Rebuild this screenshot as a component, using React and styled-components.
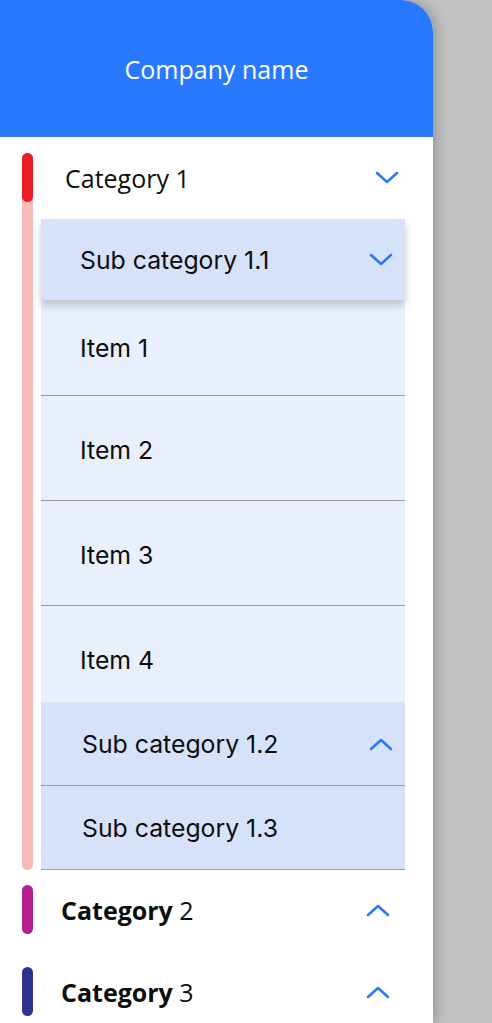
import React from "react";
import styled, { createGlobalStyle } from "styled-components";

const Global = createGlobalStyle`
  html, body { margin: 0; padding: 0; }
  body {
    background: #c2c2c2;
    font-family: "Open Sans", "Liberation Sans", sans-serif;
    overflow: hidden;
  }
`;

const Page = styled.div`
  width: 492px;
  height: 1023px;
  background: #c2c2c2;
`;

const Panel = styled.aside`
  width: 433px;
  height: 1023px;
  background: #ffffff;
  border-top-right-radius: 32px;
  box-shadow: 2px 0 14px rgba(0, 0, 0, 0.28);
  overflow: hidden;
  display: flex;
  flex-direction: column;
`;

const Header = styled.header`
  height: 137px;
  flex: none;
  background: #2979ff;
  color: #ffffff;
  display: flex;
  align-items: center;
  justify-content: center;
  font-family: "Open Sans", sans-serif;
  font-size: 25px;
  font-weight: 500;
`;

const Nav = styled.nav`
  padding: 16px 28px 0 22px;
  display: flex;
  flex-direction: column;
`;

const Group = styled.section`
  display: flex;
  gap: 8px;
  margin-top: ${(p) => p.$mt || 0}px;
`;

const Bar = styled.div`
  width: 11px;
  flex: none;
  border-radius: 6px;
  background: ${(p) => p.$color};
  display: flex;
  flex-direction: column;
`;

const BarCap = styled.div`
  height: 49px;
  border-radius: 6px;
  background: ${(p) => p.$color};
`;

const Body = styled.div`
  flex: 1;
  min-width: 0;
  display: flex;
  flex-direction: column;
`;

const CategoryRow = styled.div`
  height: 49px;
  display: flex;
  align-items: center;
  justify-content: space-between;
  padding-left: ${(p) => p.$indent}px;
  padding-right: ${(p) => p.$right}px;
`;

const CategoryLabel = styled.span`
  font-family: "Open Sans", sans-serif;
  font-size: 25px;
  color: #0d0d0d;
  b { font-weight: 700; }
`;

const SubList = styled.div`
  margin-top: 17px;
  display: flex;
  flex-direction: column;
`;

const SubRow = styled.div`
  height: ${(p) => p.$h}px;
  background: #d6e2fa;
  display: flex;
  align-items: center;
  justify-content: space-between;
  padding-left: ${(p) => p.$indent}px;
  padding-right: 12px;
  position: relative;
  z-index: ${(p) => (p.$raised ? 2 : 0)};
  box-shadow: ${(p) => (p.$raised ? "0 5px 9px rgba(0, 0, 0, 0.2)" : "none")};
  border-bottom: ${(p) => (p.$line ? "1px solid #9e9e9e" : "none")};
`;

const Label = styled.span`
  font-family: Inter, "Noto Sans", sans-serif;
  font-size: 24.8px;
  color: #0d0d0d;
`;

const Item = styled.div`
  height: ${(p) => p.$h}px;
  background: #e9effc;
  display: flex;
  align-items: center;
  padding-left: 39px;
  padding-top: ${(p) => p.$shift || 0}px;
  box-sizing: border-box;
  border-bottom: ${(p) => (p.$line ? "1px solid #9a9a9a" : "none")};
`;

const Chevron = ({ up }) => (
  <svg width="24" height="14" viewBox="0 0 24 14" fill="none">
    <polyline
      points={up ? "2,12 12,3 22,12" : "2,2 12,11 22,2"}
      stroke="#2979ff"
      strokeWidth="2.6"
      strokeLinecap="round"
      strokeLinejoin="round"
    />
  </svg>
);

export default function App() {
  return (
    <Page>
      <Global />
      <Panel>
        <Header>Company name</Header>
        <Nav>
          <Group>
            <Bar $color="#f8b9bb">
              <BarCap $color="#ed1c24" />
            </Bar>
            <Body>
              <CategoryRow $indent={24} $right={6}>
                <CategoryLabel>Category 1</CategoryLabel>
                <Chevron />
              </CategoryRow>
              <SubList>
                <SubRow $h={81} $indent={39} $raised>
                  <Label>Sub category 1.1</Label>
                  <Chevron />
                </SubRow>
                <Item $h={96} $line>
                  <Label>Item 1</Label>
                </Item>
                <Item $h={105} $line $shift={4}>
                  <Label>Item 2</Label>
                </Item>
                <Item $h={105} $line $shift={4}>
                  <Label>Item 3</Label>
                </Item>
                <Item $h={96} $shift={12}>
                  <Label>Item 4</Label>
                </Item>
                <SubRow $h={83} $indent={41} $line>
                  <Label>Sub category 1.2</Label>
                  <Chevron up />
                </SubRow>
                <SubRow $h={83} $indent={41} $line>
                  <Label>Sub category 1.3</Label>
                </SubRow>
              </SubList>
            </Body>
          </Group>
          <Group $mt={15}>
            <Bar $color="#b41e8e" />
            <Body>
              <CategoryRow $indent={20} $right={15}>
                <CategoryLabel>
                  <b>Category</b> 2
                </CategoryLabel>
                <Chevron up />
              </CategoryRow>
            </Body>
          </Group>
          <Group $mt={33}>
            <Bar $color="#2e3192" />
            <Body>
              <CategoryRow $indent={20} $right={15}>
                <CategoryLabel>
                  <b>Category</b> 3
                </CategoryLabel>
                <Chevron up />
              </CategoryRow>
            </Body>
          </Group>
        </Nav>
      </Panel>
    </Page>
  );
}
